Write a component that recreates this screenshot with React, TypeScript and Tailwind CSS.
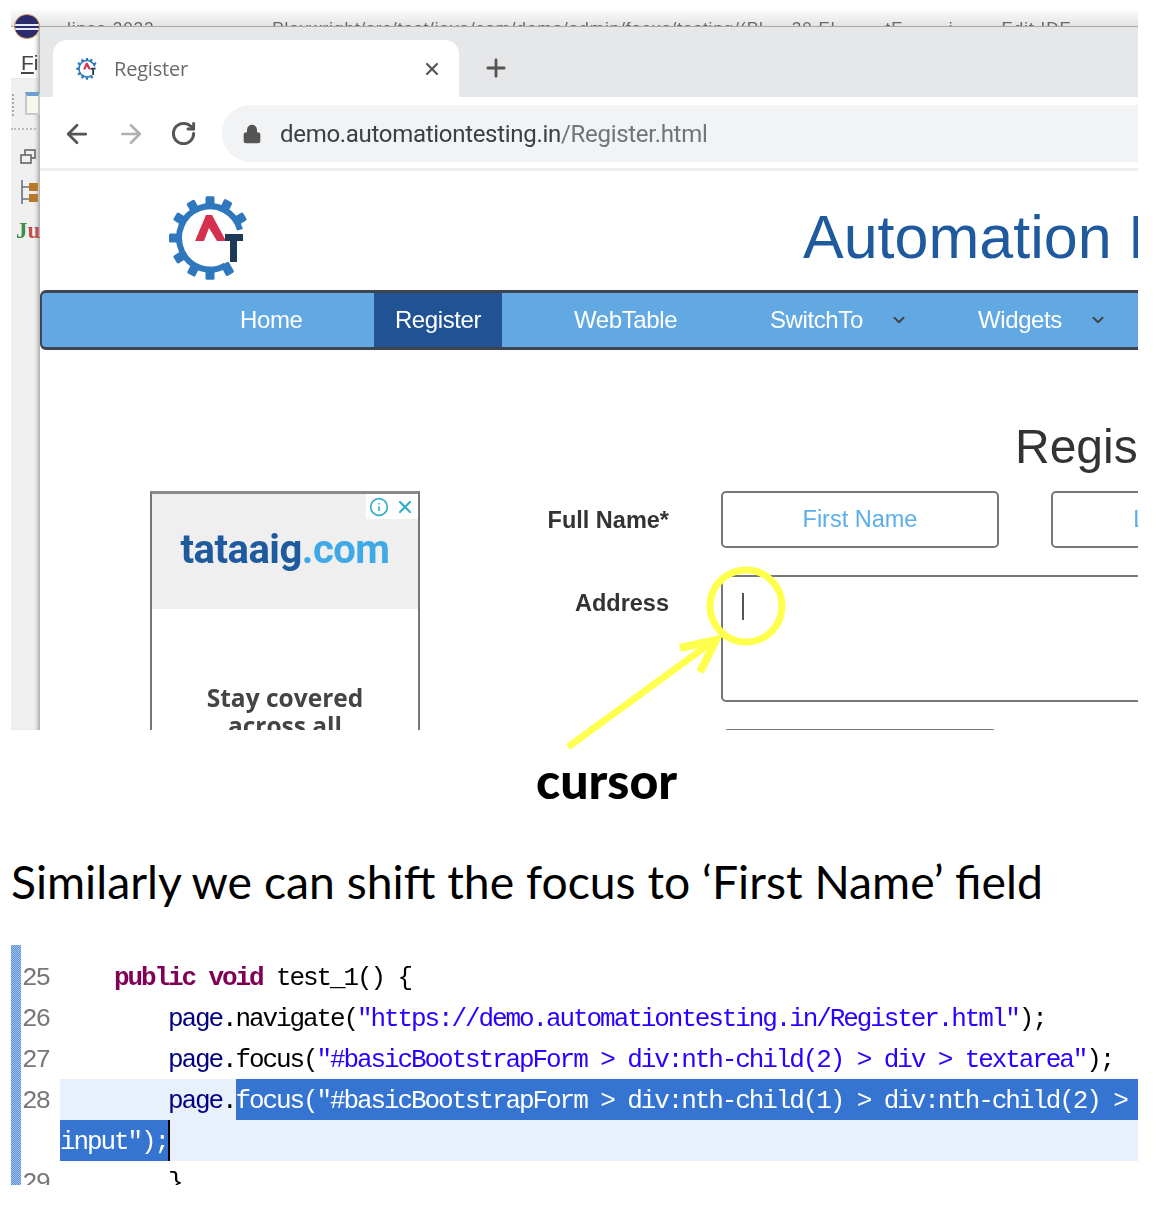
import { ArrowLeft, ArrowRight, ChevronDown, Info, Lock, Plus, RotateCw, X } from "lucide-react";

const TEETH = [0, 27, 58, 150, 180, 208, 238, 270, 302, 331];

function AtLogo({ size }: { size: number }) {
  return (
    <svg width={size} height={size * 1.05} viewBox="0 0 100 105" className="shrink-0">
      <g transform="translate(50 53) scale(1 1.02) translate(-50 -53)">
        <path d="M80 45 A31 31 0 1 0 65.5 79.8" fill="none" stroke="#2f78bd" strokeWidth="6" />
        {TEETH.map((a) => (
          <rect key={a} x="45.5" y="12" width="9" height="12" rx="1.5" fill="#2f78bd" transform={`rotate(${a} 50 53)`} />
        ))}
      </g>
      <polygon points="46,30 52,30 66,56 57,56 49,43 44,56 35,56" fill="#d5304f" />
      <path d="M65 49 H83 V56 H77 V77 H70 V56 H65 Z" fill="#1d3a57" />
    </svg>
  );
}

function TitleStrip() {
  return (
    <div className="flex h-[17px] items-start overflow-hidden border-b border-[#a8a8a8] bg-gradient-to-b from-[#fbfbfb] to-[#e4e4e4] pl-[56px] pt-[8px] text-[17px] leading-[22px] tracking-[1px] whitespace-nowrap text-[#666] [font-family:'Liberation_Sans',sans-serif]">
      <span>lipse 2022</span>
      <span className="ml-[38px]">-</span>
      <span className="ml-[73px]">Playwright/src/test/java/com/demo/admin/focus/testing/(Pl</span>
      <span className="ml-[28px]">20 El</span>
      <span className="ml-[50px]">tE</span>
      <span className="ml-[45px]">i</span>
      <span className="ml-[48px]">Edit IDE</span>
    </div>
  );
}

function EclipseStrip() {
  return (
    <div className="flex w-[29px] shrink-0 flex-col overflow-hidden bg-white shadow-[inset_-5px_0_4px_-3px_#a0a0a0]">
      <div className="h-[51px] pl-[10px] pt-[23px] text-[21px] leading-[26px] text-[#444] [font-family:'Liberation_Sans',sans-serif]">
        <span className="underline">F</span>il
      </div>
      <div className="flex flex-1 flex-col bg-[#f0f0f0] shadow-[inset_-5px_0_4px_-3px_#a0a0a0]">
        <div className="flex h-[50px] items-start pl-[1px] pt-[14px]">
          <div className="mt-[2px] h-[22px] w-[3px] border-l-2 border-dotted border-[#aaa]" />
          <div className="ml-[10px] h-[23px] w-[16px] border-2 border-t-4 border-[#c8c8c8] border-t-[#6f9fd0] bg-[#f8f6e8]" />
        </div>
        <div className="h-[1px] border-t-2 border-dotted border-[#bbb]" />
        <div className="flex h-[40px] items-center pl-[9px] pt-[14px]">
          <svg width="16" height="16" viewBox="0 0 16 16" fill="none" stroke="#666" strokeWidth="1.6">
            <rect x="5" y="1" width="10" height="8" />
            <rect x="1" y="6" width="10" height="8" fill="#f0f0f0" />
          </svg>
        </div>
        <div className="flex h-[38px] items-center pl-[9px] pt-[6px]">
          <svg width="20" height="26" viewBox="0 0 20 26">
            <path d="M2 1 V25 M2 8 H9 M2 20 H9" stroke="#6b7280" strokeWidth="1.6" fill="none" />
            <rect x="9" y="4" width="9" height="8" fill="#b9772c" />
            <rect x="9" y="15" width="9" height="8" fill="#b9772c" />
          </svg>
        </div>
        <div className="pl-[5px] pt-[10px] text-[23px] leading-[26px] font-bold [font-family:'Liberation_Serif',serif]">
          <span className="text-[#3d8f4d]">J</span>
          <span className="text-[#c0504d]">u</span>
        </div>
      </div>
    </div>
  );
}

function TabBar() {
  return (
    <div className="flex h-[70px] items-end bg-[#e6e7e9] pl-[13px]">
      <div className="flex h-[57px] w-[406px] items-center rounded-t-[14px] bg-white pl-[21px] pr-[17px]">
        <AtLogo size={26} />
        <span className="ml-[14px] text-[20px] tracking-[-0.2px] text-[#6a6a6a] [font-family:'Open_Sans',sans-serif]">Register</span>
        <X className="ml-auto text-[#555]" size={20} strokeWidth={2.6} />
      </div>
      <Plus className="mb-[15px] ml-[23px] text-[#555]" size={28} strokeWidth={2.4} />
    </div>
  );
}

function AddressBar() {
  return (
    <div className="flex h-[74px] items-start border-b-[3px] border-[#eeeeee] bg-white pl-[22px] pt-[8px]">
      <div className="flex h-[57px] w-[160px] items-center">
        <ArrowLeft className="text-[#555]" size={30} strokeWidth={2.2} />
        <ArrowRight className="ml-[24px] text-[#b0b0b0]" size={30} strokeWidth={2} />
        <RotateCw className="ml-[24px] text-[#555]" size={27} strokeWidth={2.6} />
      </div>
      <div className="flex h-[57px] flex-1 items-center rounded-l-[29px] bg-[#f1f3f4] pl-[20px]">
        <Lock className="text-[#555]" size={20} fill="#555" />
        <span className="ml-[18px] text-[24px] tracking-[-0.3px] whitespace-nowrap text-[#3c4043] [font-family:'Roboto',sans-serif]">
          demo.automationtesting.in<span className="text-[#70757a]">/Register.html</span>
        </span>
      </div>
    </div>
  );
}

function NavBar() {
  return (
    <nav className="flex h-[60px] items-stretch overflow-hidden rounded-l-[6px] border-y-[3px] border-l-2 border-y-[#3c4650] border-l-[#3c4650] bg-[#62a8e3] text-[24px] tracking-[-0.4px] text-white [font-family:'Liberation_Sans',sans-serif]">
      <div className="flex w-[332px] shrink-0 items-center pl-[198px]">Home</div>
      <div className="flex w-[128px] shrink-0 items-center justify-center bg-[#215294]">Register</div>
      <div className="flex w-[268px] shrink-0 items-center pl-[72px]">WebTable</div>
      <div className="flex w-[208px] shrink-0 items-center">
        <span className="w-[95px]">SwitchTo</span>
        <ChevronDown className="ml-[25px] text-[#444]" size={18} strokeWidth={2.6} />
      </div>
      <div className="flex shrink-0 items-center">
        <span className="w-[85px]">Widgets</span>
        <ChevronDown className="ml-[26px] text-[#444]" size={18} strokeWidth={2.6} />
      </div>
    </nav>
  );
}

function AdBox() {
  return (
    <div className="relative ml-[110px] h-[240px] w-[270px] shrink-0 overflow-hidden border-x-2 border-t-[3px] border-x-[#777] border-t-[#8a8a8a] bg-white">
      <div className="absolute right-0 top-0 flex h-[25px] w-[52px] items-center justify-center gap-[6px] bg-white">
        <Info className="text-[#35aecb]" size={20} />
        <X className="text-[#35aecb]" size={20} strokeWidth={2.6} />
      </div>
      <div className="flex h-[115px] justify-center bg-[#efefef] pt-[31px] text-[40px] leading-[50px] font-bold tracking-[-0.5px] [font-family:'Roboto',sans-serif]">
        <span className="text-[#1f5a9e]">
          tataaig<span className="text-[#3fa9e8]">.com</span>
        </span>
      </div>
      <div className="pt-[75px] text-center text-[24.5px] leading-[28px] font-bold text-[#444] [font-family:'Open_Sans',sans-serif]">
        Stay covered
        <br />
        across all
      </div>
    </div>
  );
}

function RegisterForm() {
  return (
    <div className="flex flex-col gap-[27px] text-[23.5px] [font-family:'Liberation_Sans',sans-serif]">
      <div className="flex h-[57px] items-center">
        <label className="w-[249px] pt-[2px] text-right font-bold text-[#333]">Full Name*</label>
        <div className="ml-[52px] flex h-[57px] w-[278px] items-center justify-center rounded-[5px] border-2 border-[#777] text-[#5baeea]">First Name</div>
        <div className="ml-[52px] flex h-[57px] w-[278px] items-center justify-center rounded-[5px] border-2 border-[#777] text-[#5baeea]">Last Name</div>
      </div>
      <div className="flex h-[127px] items-start">
        <label className="mt-[11px] w-[249px] text-right font-bold text-[#333]">Address</label>
        <div className="ml-[52px] h-[127px] w-[600px] rounded-[5px] border-2 border-[#777] pl-[19px] pt-[16px]">
          <div className="h-[27px] w-[2px] bg-[#555]" />
        </div>
      </div>
      <div className="flex">
        <div className="ml-[303px] h-[57px] w-[274px] rounded-[5px] border-t-2 border-[#777]" />
      </div>
    </div>
  );
}

function BrowserShot() {
  return (
    <div className="relative h-[720px] w-[1127px] overflow-hidden blur-[0.7px]">
      <TitleStrip />
      <div className="flex h-[703px]">
        <EclipseStrip />
        <div className="w-[1098px] overflow-hidden bg-white">
          <TabBar />
          <AddressBar />
          <div className="flex h-[119px] items-start overflow-hidden whitespace-nowrap">
            <div className="ml-[120px] mt-[14px]">
              <AtLogo size={100} />
            </div>
            <span className="ml-[543px] mt-[30px] text-[61px] leading-[72px] text-[#1f5a9e] [font-family:'Liberation_Sans',sans-serif]">Automation Demo Site</span>
          </div>
          <NavBar />
          <div className="h-[141px] pl-[975px] pt-[71px] text-[48px] leading-[52px] whitespace-nowrap text-[#333] [font-family:'Liberation_Sans',sans-serif]">Register</div>
          <div className="flex items-start overflow-hidden">
            <AdBox />
            <RegisterForm />
          </div>
        </div>
      </div>
      {/* eclipse app icon sits on top of the title strip */}
      <div className="absolute left-[3px] top-[4px] flex h-[25px] w-[26px] flex-col justify-center gap-[2px] overflow-hidden rounded-full border border-[#e0a860] bg-[#2c2a6e]">
        <div className="h-[2px] bg-[#e8e8f0]" />
        <div className="h-[2px] bg-[#e8e8f0]" />
      </div>
    </div>
  );
}

function CodeRow({ num, children, active }: { num?: number; children: React.ReactNode; active?: boolean }) {
  return (
    <div className="flex h-[41px]">
      <div className="w-[39px] shrink-0 pl-[1px] text-[#787878]">{num}</div>
      <div className={active ? "flex w-[1078px] whitespace-pre bg-[#e8f0fc]" : "flex w-[1078px] whitespace-pre"}>{children}</div>
    </div>
  );
}

function CodeBlock() {
  const str = "text-[#2a00ff]";
  return (
    <div className="flex h-[240px] w-[1127px] overflow-hidden blur-[0.3px]">
      <div className="w-[10px] shrink-0 bg-[repeating-conic-gradient(#5b8fd6_0_25%,#a8c4ea_0_50%)] bg-[length:2px_2px]" />
      <div className="flex-1 pt-[11px] text-[26px] leading-[45px] tracking-[-2.1px] text-black [font-family:'Liberation_Mono',monospace]">
        <CodeRow num={25}>
          <span>
            {"    "}
            <span className="font-bold text-[#7f0055]">public void</span> test_1() {"{"}
          </span>
        </CodeRow>
        <CodeRow num={26}>
          <span>
            {"        "}
            <span className="text-[#000080]">page</span>.navigate(<span className={str}>"https://demo.automationtesting.in/Register.html"</span>);
          </span>
        </CodeRow>
        <CodeRow num={27}>
          <span>
            {"        "}
            <span className="text-[#000080]">page</span>.focus(<span className={str}>"#basicBootstrapForm &gt; div:nth-child(2) &gt; div &gt; textarea"</span>);
          </span>
        </CodeRow>
        <CodeRow num={28} active>
          <span>
            {"        "}
            <span className="text-[#000080]">page</span>.
          </span>
          <span className="flex-1 bg-[#3574d0] text-white">focus("#basicBootstrapForm &gt; div:nth-child(1) &gt; div:nth-child(2) &gt;</span>
        </CodeRow>
        <CodeRow active>
          <span className="border-r-2 border-black bg-[#3574d0] text-white">input");</span>
        </CodeRow>
        <CodeRow num={29}>
          <span>{"        }"}</span>
        </CodeRow>
      </div>
    </div>
  );
}

export default function App() {
  return (
    <div className="relative h-[1216px] w-[1176px] overflow-hidden bg-white pl-[11px] pt-[10px]">
      <BrowserShot />
      <div className="h-[110px] pl-[525px] pt-[26px] text-[50px] leading-[48px] font-black text-black [font-family:'Lato',sans-serif]">cursor</div>
      <div className="h-[105px] pt-[11px] text-[46.3px] leading-[60px] whitespace-nowrap text-black [font-family:'Lato',sans-serif]">Similarly we can shift the focus to ‘First Name’ field</div>
      <CodeBlock />
      {/* yellow marker annotation drawn over the screenshot */}
      <svg className="absolute left-[540px] top-[550px]" width="260" height="210" viewBox="540 550 260 210" fill="none" stroke="#ffff4d">
        <ellipse cx="746" cy="606" rx="36" ry="36" strokeWidth="7" />
        <path d="M568 747 L712 642" strokeWidth="7" />
        <path d="M680 648 L716 640 L700 672" strokeWidth="8" />
      </svg>
    </div>
  );
}
